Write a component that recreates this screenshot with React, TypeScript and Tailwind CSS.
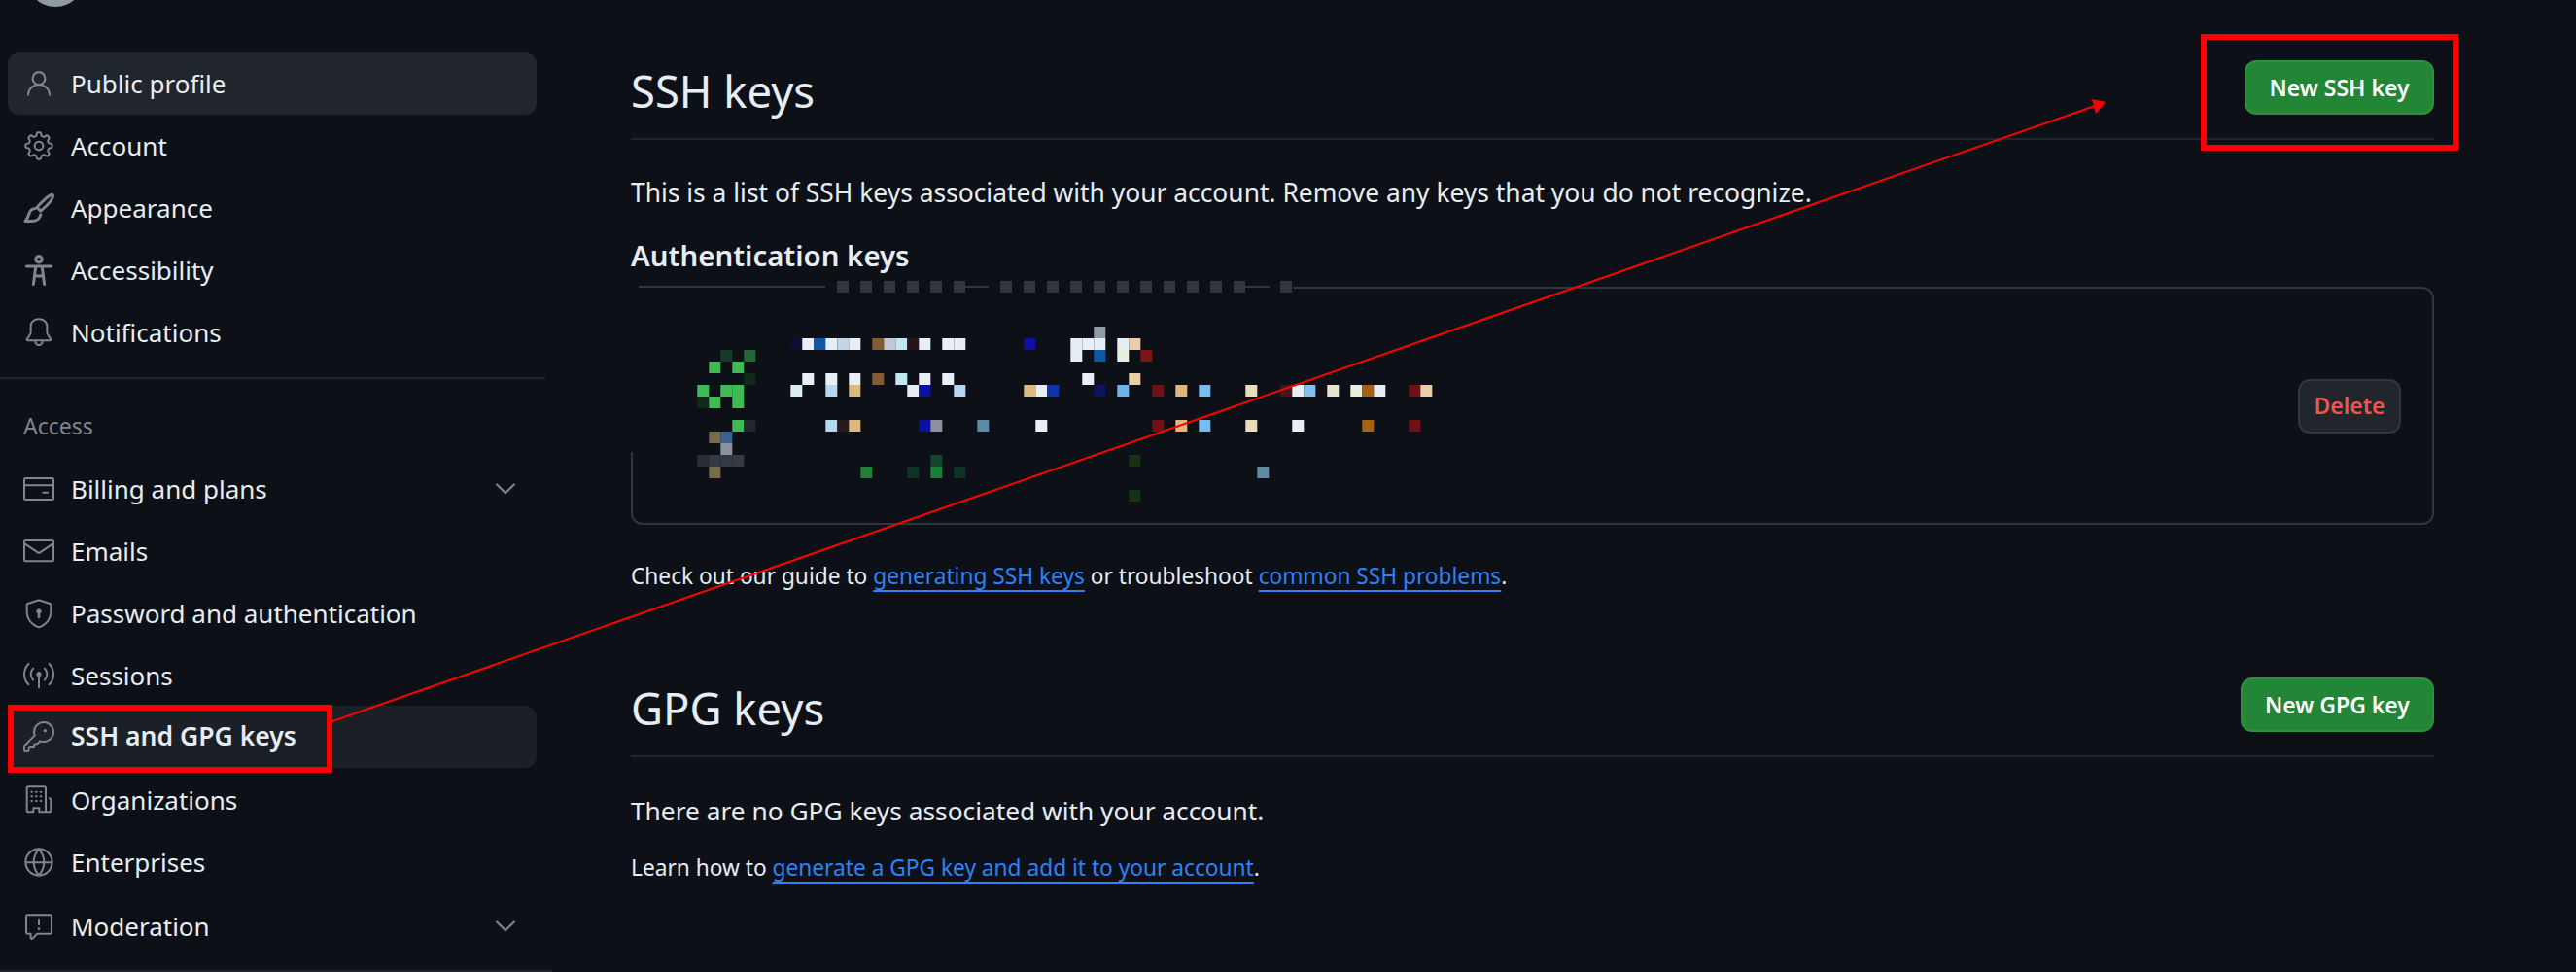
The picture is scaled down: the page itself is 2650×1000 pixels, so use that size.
import React from "react";
import {
  GoBell,
  GoBroadcast,
  GoChevronDown,
  GoCreditCard,
  GoGear,
  GoGlobe,
  GoKey,
  GoMail,
  GoOrganization,
  GoPerson,
  GoReport,
  GoShieldLock,
} from "react-icons/go";

type IconProps = { size?: number; className?: string };

interface NavItem {
  label: string;
  icon: React.ComponentType<IconProps>;
  active?: string;
  bold?: boolean;
  chevron?: boolean;
  extra?: string;
}

const PaintbrushIcon = ({ size, className }: IconProps) => (
  <svg width={size} height={size} viewBox="0 0 16 16" fill="none" stroke="currentColor" strokeWidth="1.5" strokeLinejoin="round" className={className}>
    <path d="M14.6 1.1c-1.3.3-5.2 3.6-7.6 6.6l1.9 1.9c2.9-2.5 6-6 6.3-7.5.1-.6-.1-1.1-.6-1z" />
    <path d="M6.7 8.2c-1.9-.1-3.2 1-3.7 2.6-.3 1.2-.8 2.6-2 3.9h3.6c2.6 0 4.3-1.6 4.4-3.9" />
  </svg>
);

const AccessibilityIcon = ({ size, className }: IconProps) => (
  <svg width={size} height={size} viewBox="0 0 16 16" fill="none" stroke="currentColor" strokeWidth="1.5" strokeLinecap="round" className={className}>
    <circle cx="8" cy="2.4" r="1.6" />
    <path d="M1.7 6h12.6M6.4 6 5.2 15.2M9.6 6l1.2 9.2M5.8 11h4.4" />
  </svg>
);

const topNav: NavItem[] = [
  { label: "Public profile", icon: GoPerson, active: "bg-[#21262d]" },
  { label: "Account", icon: GoGear },
  { label: "Appearance", icon: PaintbrushIcon },
  { label: "Accessibility", icon: AccessibilityIcon },
  { label: "Notifications", icon: GoBell },
];

const accessNav: NavItem[] = [
  { label: "Billing and plans", icon: GoCreditCard, chevron: true },
  { label: "Emails", icon: GoMail },
  { label: "Password and authentication", icon: GoShieldLock },
  { label: "Sessions", icon: GoBroadcast },
  { label: "SSH and GPG keys", icon: GoKey, active: "bg-[#1b2026]", bold: true, extra: "-mt-px" },
  { label: "Organizations", icon: GoOrganization, extra: "mt-px" },
  { label: "Enterprises", icon: GoGlobe },
  { label: "Moderation", icon: GoReport, chevron: true, extra: "mt-[2px]" },
];

const white = "#e8eef6";
const green = "#40bb54";
const blue = "#b5d8f0";
const sand = "#dcb97e";
const navy = "#0e11a0";
const peach = "#e9cfa9";
const maroon = "#6e1218";
const brick = "#a66214";
const sky = "#7abcee";
const cream = "#e8dfba";

// blurred key text: [column, row, colour] on a 12px grid
const mosaic: [number, number, string][] = [
  [34, -1, "#8c9da5"],
  [8, 0, "#0c0f33"], [9, 0, white], [10, 0, "#0f56a8"], [11, 0, white], [12, 0, "#c3d3e8"], [13, 0, white],
  [15, 0, "#835c33"], [16, 0, "#c3c8d2"], [17, 0, "#c0e6f0"], [18, 0, "#2d1219"], [19, 0, white],
  [21, 0, white], [22, 0, white], [28, 0, navy], [32, 0, white], [33, 0, white], [34, 0, white],
  [36, 0, white], [37, 0, peach],
  [2, 1, "#173b28"], [4, 1, "#246636"], [32, 1, white], [34, 1, "#0f56a8"], [36, 1, "#e8eedf"], [38, 1, "#7c1418"],
  [1, 2, green], [3, 2, green],
  [4, 3, "#102a1a"], [9, 3, white], [11, 3, white], [13, 3, white], [15, 3, "#835c33"], [17, 3, "#c0e6f0"],
  [19, 3, white], [21, 3, white], [33, 3, white], [37, 3, peach],
  [0, 4, green], [2, 4, green], [3, 4, green], [8, 4, "#dceef5"], [11, 4, blue], [13, 4, sand], [18, 4, white],
  [19, 4, navy], [22, 4, blue], [28, 4, sand], [29, 4, white], [30, 4, "#0f33ae"], [34, 4, "#0d1160"],
  [36, 4, "#6eb4e6"], [39, 4, maroon], [41, 4, "#e2b77f"], [43, 4, sky], [47, 4, cream], [50, 4, "#4a1419"],
  [51, 4, white], [52, 4, "#85bff0"], [54, 4, "#e6e4cf"], [56, 4, "#e8eedc"], [57, 4, brick], [58, 4, white],
  [61, 4, maroon], [62, 4, peach],
  [0, 5, "#102a1a"], [1, 5, green], [3, 5, green],
  [3, 7, green], [4, 7, "#22262e"], [11, 7, blue], [12, 7, "#281a1a"], [13, 7, sand], [19, 7, navy],
  [20, 7, "#8b919e"], [24, 7, "#5a8aa5"], [29, 7, white], [39, 7, maroon], [41, 7, "#e2b77f"], [43, 7, sky],
  [47, 7, cream], [51, 7, white], [57, 7, brick], [61, 7, maroon],
  [1, 8, "#786a4e"], [2, 8, "#3a6490"],
  [2, 9, "#8b919e"],
  [0, 10, "#2a2e36"], [1, 10, "#343a42"], [2, 10, "#343a42"], [3, 10, "#343a42"], [20, 10, "#14452a"], [37, 10, "#18321a"],
  [1, 11, "#786a4e"], [14, 11, "#237f37"], [18, 11, "#0f3225"], [20, 11, "#168038"], [22, 11, "#0f3225"], [48, 11, "#628a9e"],
  [37, 13, "#18321a"],
];

// squares left on the card's top border by the same blur
const borderSquares = [
  861, 885, 909, 933, 957, 981, 1029, 1053, 1077, 1101, 1125, 1149, 1173, 1197, 1221, 1245, 1269, 1317,
];

const NavRow = ({ item }: { item: NavItem }) => {
  const Icon = item.icon;
  return (
    <div
      className={`ml-2 flex h-16 w-[544px] shrink-0 items-center rounded-xl pl-4 ${item.active ?? ""} ${item.extra ?? ""}`}
    >
      <Icon size={32} className="shrink-0 text-[#7d8590]" />
      <span className={`ml-[17px] ${item.bold ? "text-[26.5px] font-semibold" : ""}`}>{item.label}</span>
      {item.chevron && <GoChevronDown size={34} className="ml-auto mr-[15px] text-[#7d8590]" />}
    </div>
  );
};

const GreenButton = ({ children, width }: { children: React.ReactNode; width: string }) => (
  <button
    className={`flex h-14 ${width} items-center justify-center rounded-xl border-2 border-[#2e8f41] bg-[#238636] text-[23px] font-semibold text-white`}
  >
    {children}
  </button>
);

const A = ({ children }: { children: React.ReactNode }) => (
  <a className="text-[#2f81f7] underline decoration-2 underline-offset-[6px]">{children}</a>
);

export default function App() {
  return (
    <div
      className="relative flex h-[1000px] w-[2650px] overflow-hidden bg-[#0d1117] text-[26px] text-[#e6edf3]"
      style={{ fontFamily: '"Noto Sans", sans-serif' }}
    >
      <aside className="flex h-[1000px] w-[561px] shrink-0 flex-col">
        <div className="-mt-[53px] mb-[47px] ml-[27px] h-[60px] w-[60px] shrink-0 rounded-full bg-[#8f9ba0]" />
        {topNav.map((item) => (
          <NavRow key={item.label} item={item} />
        ))}
        <div className="mt-[14px] h-[2px] w-full shrink-0 bg-[#21262d]" />
        <div className="mb-[17px] ml-6 mt-8 flex h-8 shrink-0 items-center text-[23px] text-[#7d8590]">Access</div>
        {accessNav.map((item) => (
          <NavRow key={item.label} item={item} />
        ))}
        <div className="mt-auto h-[2px] w-[568px] shrink-0 bg-[#21262d]" />
      </aside>

      <main className="ml-[88px] flex w-[1855px] shrink-0 flex-col pt-[62px]">
        <div className="flex items-center justify-between border-b-2 border-[#21262d] pb-6">
          <h2 className="pt-[6px] text-[45.4px] leading-[50px]">SSH keys</h2>
          <GreenButton width="w-[195px]">New SSH key</GreenButton>
        </div>
        <p className="mt-[38px] h-8 text-[26.4px] leading-8">
          This is a list of SSH keys associated with your account. Remove any keys that you do not recognize.
        </p>
        <h3 className="mt-[29px] h-10 text-[29.4px] font-semibold leading-10">Authentication keys</h3>
        <div className="relative mt-3 flex h-[245px] items-center justify-end rounded-xl border-2 border-[#30363d] pr-8">
          <button className="flex h-14 w-[106px] items-center justify-center rounded-xl border-2 border-[#30363d] bg-[#21262d] text-[23px] font-semibold text-[#f85149]">
            Delete
          </button>
          <svg
            className="absolute -left-[2px] -top-[2px] h-[245px] w-[1855px] overflow-visible"
            viewBox="649 295 1855 245"
          >
            <rect x="645" y="290" width="12" height="175" fill="#0d1117" />
            <rect x="657" y="290" width="673" height="10" fill="#0d1117" />
            <rect x="657" y="294" width="192" height="2" fill="#30363d" />
            <rect x="993" y="294" width="24" height="2" fill="#30363d" />
            <rect x="1281" y="294" width="25" height="2" fill="#30363d" />
            {borderSquares.map((x) => (
              <rect key={x} x={x} y="289" width="12" height="12" fill="#30363d" />
            ))}
            {mosaic.map(([c, r, fill]) => (
              <rect key={`${c}-${r}`} x={717.3 + c * 12} y={348 + r * 12} width="12" height="12" fill={fill} />
            ))}
          </svg>
        </div>
        <p className="mt-[37px] h-8 text-[22.7px] leading-8">
          Check out our guide to <A>generating SSH keys</A> or troubleshoot <A>common SSH problems</A>.
        </p>
        <div className="mt-[88px] flex items-center justify-between border-b-2 border-[#21262d] pb-6">
          <h2 className="pt-[6px] text-[45.4px] leading-[50px]">GPG keys</h2>
          <GreenButton width="w-[199px]">New GPG key</GreenButton>
        </div>
        <p className="mt-[39px] h-8 text-[26.3px] leading-8">There are no GPG keys associated with your account.</p>
        <p className="mt-[27px] h-8 text-[22.7px] leading-8">
          Learn how to <A>generate a GPG key and add it to your account</A>.
        </p>
      </main>

      {/* red annotations drawn on top of the screenshot */}
      <div className="absolute left-2 top-[725px] h-[70px] w-[334px] border-[6px] border-[#ff0000]" />
      <div className="absolute left-[2264px] top-[35px] h-[120px] w-[265px] border-[6px] border-[#ff0000]" />
      <svg className="absolute left-0 top-0 h-[1000px] w-[2650px]" viewBox="0 0 2650 1000">
        <line x1="342" y1="742" x2="2158" y2="108" stroke="#ff0000" strokeWidth="2" />
        <polygon points="2166,105 2152,102 2156,117" fill="#ff0000" />
      </svg>
    </div>
  );
}
